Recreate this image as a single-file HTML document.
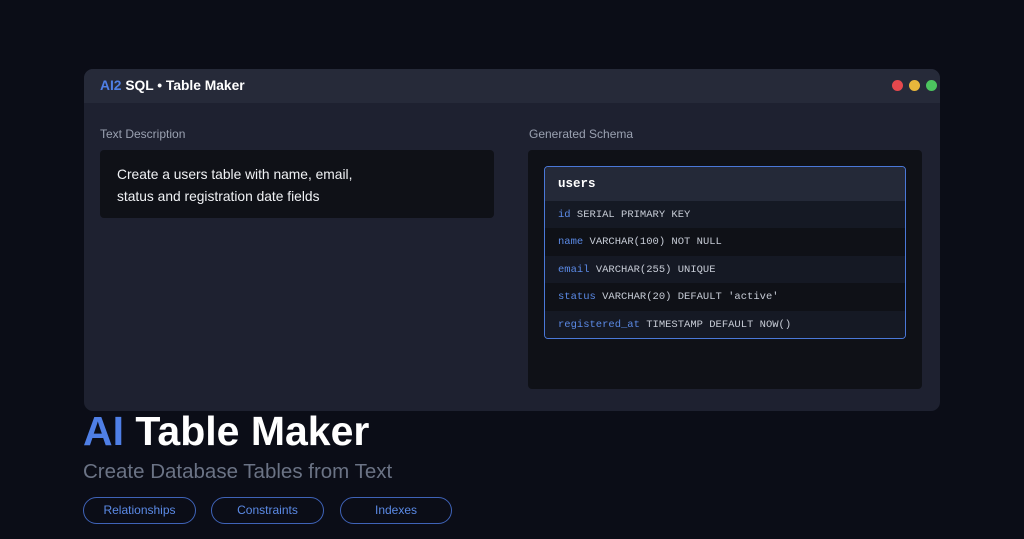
<!DOCTYPE html>
<html><head><style>
*{margin:0;padding:0;box-sizing:border-box}
body{width:1024px;height:539px;background:#0b0d17;font-family:"Liberation Sans",sans-serif;position:relative;overflow:hidden}
.win{position:absolute;left:84px;top:69px;width:856px;height:342px;background:#1e2130;border-radius:9px;overflow:hidden}
.bar{height:34px;background:#262a39;position:relative}
.bar .t{position:absolute;left:16px;top:9px;font-size:13.8px;font-weight:bold;color:#fff}
.blue{color:#4f7fe6}
.dot{position:absolute;top:11px;width:11px;height:11px;border-radius:50%}
.lab{position:absolute;font-size:12px;color:#9aa1b1}
.box{position:absolute;background:#0f1117;border-radius:4px}
.desc{font-size:13.8px;color:#f0f2f5;line-height:22px;padding:14px 17px}
.tbl{position:absolute;left:16px;top:16px;width:362px;height:173px;border:1.5px solid #4a78d8;border-radius:4px;overflow:hidden;font-family:"Liberation Mono",monospace;font-size:10.5px;color:#c7ccd6}
.th{height:34px;background:#242938;color:#fff;font-weight:bold;font-size:12.5px;padding:10px 13px}
.r{height:27.4px;padding:8px 13px}
.r:nth-child(even){background:#151924}
.r:nth-child(odd){background:#0f1117}
.k{color:#5b8ae6}
h1{position:absolute;left:83px;top:408px;font-size:41px;font-weight:bold;color:#fff}
.sub{position:absolute;left:83px;top:460px;font-size:20.5px;color:#6b7385}
.btn{position:absolute;top:497px;height:27px;width:113px;border:1.3px solid #3f63b8;border-radius:14px;color:#5b8ae6;font-size:12px;text-align:center;line-height:24px}
</style></head><body>
<div class="win">
 <div class="bar"><div class="t"><span class="blue">AI2</span> SQL • Table Maker</div>
  <div class="dot" style="left:808px;background:#e5484d"></div>
  <div class="dot" style="left:825px;background:#e9b73b"></div>
  <div class="dot" style="left:842px;background:#4cc45f"></div>
 </div>
 <div class="lab" style="left:16px;top:58px">Text Description</div>
 <div class="box desc" style="left:16px;top:81px;width:394px;height:68px">Create a users table with name, email,<br>status and registration date fields</div>
 <div class="lab" style="left:445px;top:58px">Generated Schema</div>
 <div class="box" style="left:444px;top:81px;width:394px;height:239px">
  <div class="tbl">
   <div class="th">users</div>
   <div class="r"><span class="k">id</span> SERIAL PRIMARY KEY</div>
   <div class="r"><span class="k">name</span> VARCHAR(100) NOT NULL</div>
   <div class="r"><span class="k">email</span> VARCHAR(255) UNIQUE</div>
   <div class="r"><span class="k">status</span> VARCHAR(20) DEFAULT 'active'</div>
   <div class="r"><span class="k">registered_at</span> TIMESTAMP DEFAULT NOW()</div>
  </div>
 </div>
</div>
<h1><span class="blue">AI</span> Table Maker</h1>
<div class="sub">Create Database Tables from Text</div>
<div class="btn" style="left:83px">Relationships</div>
<div class="btn" style="left:211px">Constraints</div>
<div class="btn" style="left:340px;width:112px">Indexes</div>
</body></html>
